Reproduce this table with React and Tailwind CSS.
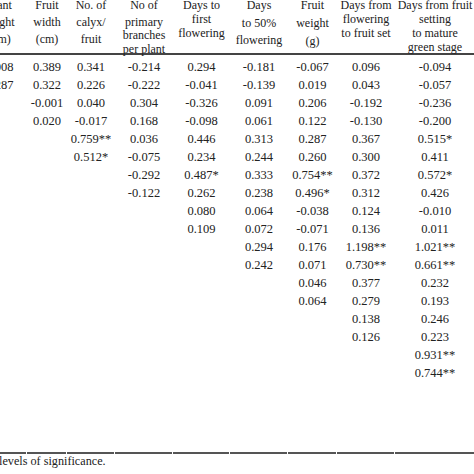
const columns = [
  {
    width: "w-[55px]",
    head: [["Plant", ""], ["height", "mt-[3px]"], ["(cm)", "mt-[3px]"]],
    values: ["0.008", "0.287"],
  },
  {
    width: "w-[40px]",
    head: [["Fruit", ""], ["width", "mt-[3px]"], ["(cm)", "mt-[3px]"]],
    values: ["0.389", "0.322", "-0.001", "0.020"],
  },
  {
    width: "w-[48px]",
    head: [["No. of", ""], ["calyx/", "mt-[3px]"], ["fruit", "mt-[3px]"]],
    values: ["0.341", "0.226", "0.040", "-0.017", "0.759**", "0.512*"],
  },
  {
    width: "w-[58px]",
    head: [["No of", ""], ["primary", "mt-[3px]"], ["branches", "-mt-px"], ["per plant", ""]],
    values: ["-0.214", "-0.222", "0.304", "0.168", "0.036", "-0.075", "-0.292", "-0.122"],
  },
  {
    width: "w-[57px]",
    head: [["Days to", ""], ["first", ""], ["flowering", ""]],
    values: ["0.294", "-0.041", "-0.326", "-0.098", "0.446", "0.234", "0.487*", "0.262", "0.080", "0.109"],
  },
  {
    width: "w-[58px]",
    head: [["Days", ""], ["to 50%", "mt-[4px]"], ["flowering", "mt-[3px]"]],
    values: ["-0.181", "-0.139", "0.091", "0.061", "0.313", "0.244", "0.333", "0.238", "0.064", "0.072", "0.294", "0.242"],
  },
  {
    width: "w-[49px]",
    head: [["Fruit", ""], ["weight", "mt-[4px]"], ["(g)", "mt-[4px]"]],
    values: ["-0.067", "0.019", "0.206", "0.122", "0.287", "0.260", "0.754**", "0.496*", "-0.038", "-0.071", "0.176", "0.071", "0.046", "0.064"],
  },
  {
    width: "w-[58px]",
    head: [["Days from", ""], ["flowering", ""], ["to fruit set", ""]],
    values: ["0.096", "0.043", "-0.192", "-0.130", "0.367", "0.300", "0.372", "0.312", "0.124", "0.136", "1.198**", "0.730**", "0.377", "0.279", "0.138", "0.126"],
  },
  {
    width: "w-[80px]",
    head: [["Days from fruit", ""], ["setting", ""], ["to mature", ""], ["green stage", ""]],
    values: ["-0.094", "-0.057", "-0.236", "-0.200", "0.515*", "0.411", "0.572*", "0.426", "-0.010", "0.011", "1.021**", "0.661**", "0.232", "0.193", "0.246", "0.223", "0.931**", "0.744**"],
  },
];

export default function App() {
  return (
    <div className="h-[474px] w-[474px] overflow-hidden bg-white font-['Liberation_Serif',serif] text-[#222]">
      <div className="-ml-[28px] -mt-[3px] flex w-[503px] flex-col">
        {/* header */}
        <div className="flex h-[58px] border-b-2 border-[#444]">
          {columns.map((col, i) => (
            <div key={i} className={`${col.width} flex shrink-0 flex-col items-center pt-px text-center text-[12px] leading-[14px]`}>
              {col.head.map(([line, gap]) => (
                <span key={line} className={`${gap} whitespace-nowrap`}>{line}</span>
              ))}
            </div>
          ))}
        </div>

        {/* body */}
        <div className="flex h-[397px] pt-[3px]">
          {columns.map((col, i) => (
            <div key={i} className={`${col.width} flex shrink-0 flex-col items-center text-[12.5px] leading-[18px]`}>
              {col.values.map((v, j) => (
                <span key={j} className="whitespace-nowrap">{v}</span>
              ))}
            </div>
          ))}
        </div>

        {/* bottom rule */}
        <div className="flex">
          {columns.map((col, i) => (
            <div key={i} className={`${col.width} flex shrink-0 pr-px`}>
              <div className="h-[1.5px] w-full bg-[#555]" />
            </div>
          ))}
        </div>
      </div>
      <p className="-ml-px whitespace-nowrap text-[12.2px] leading-[14px]">levels of significance.</p>
    </div>
  );
}
